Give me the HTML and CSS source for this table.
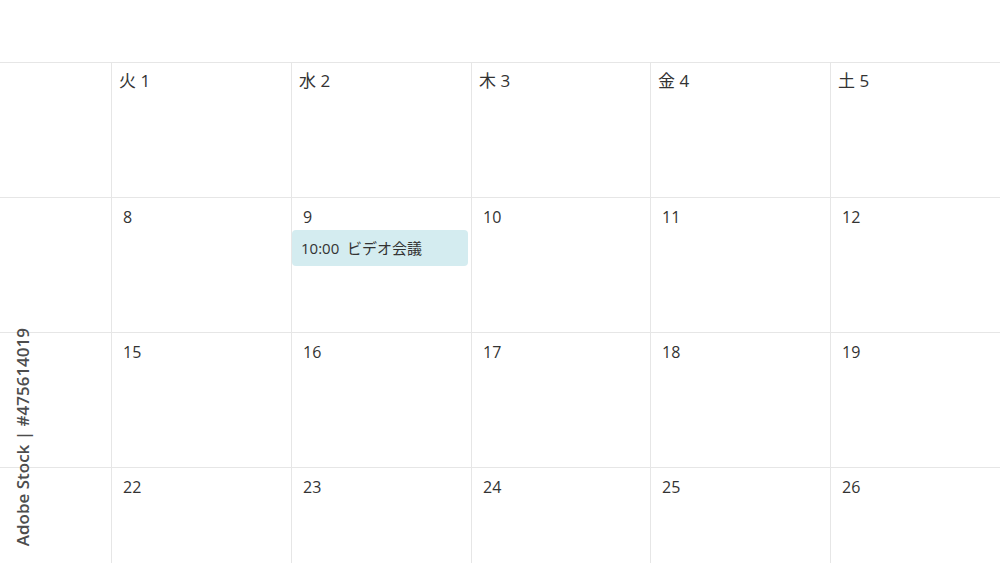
FILE: index.html
```html
<!DOCTYPE html>
<html lang="ja">
<head>
<meta charset="utf-8">
<link rel="stylesheet" href="styles.css">
</head>
<body>
<div class="page">
  <div class="grid">
    <div class="cell"></div>
    <div class="cell"><div class="num">火 1</div></div>
    <div class="cell"><div class="num">水 2</div></div>
    <div class="cell"><div class="num">木 3</div></div>
    <div class="cell"><div class="num">金 4</div></div>
    <div class="cell"><div class="num">土 5</div></div>

    <div class="cell"></div>
    <div class="cell"><div class="num">8</div></div>
    <div class="cell"><div class="num">9</div><div class="event">10:00&nbsp; ビデオ会議</div></div>
    <div class="cell"><div class="num">10</div></div>
    <div class="cell"><div class="num">11</div></div>
    <div class="cell"><div class="num">12</div></div>

    <div class="cell"></div>
    <div class="cell"><div class="num">15</div></div>
    <div class="cell"><div class="num">16</div></div>
    <div class="cell"><div class="num">17</div></div>
    <div class="cell"><div class="num">18</div></div>
    <div class="cell"><div class="num">19</div></div>

    <div class="cell"></div>
    <div class="cell"><div class="num">22</div></div>
    <div class="cell"><div class="num">23</div></div>
    <div class="cell"><div class="num">24</div></div>
    <div class="cell"><div class="num">25</div></div>
    <div class="cell"><div class="num">26</div></div>
  </div>
  <div class="stamp">Adobe Stock | #475614019</div>
</div>
</body>
</html>
```
FILE: styles.css
```css
html, body {
  margin: 0;
  padding: 0;
  background: #ffffff;
  overflow: hidden;
}
.page {
  position: relative;
  width: 1000px;
  height: 563px;
  overflow: hidden;
  padding-top: 62px;
  box-sizing: border-box;
  font-family: "Open Sans", "Noto Sans CJK JP", sans-serif;
  color: #333333;
}
.grid {
  display: grid;
  grid-template-columns: 112px 180px 180px 179px 180px 180px;
  grid-auto-rows: 135px;
  border-top: 1px solid #e6e6e6;
  width: 1011px;
}
.cell {
  border-right: 1px solid #e6e6e6;
  border-bottom: 1px solid #e6e6e6;
  box-sizing: border-box;
  display: flex;
  flex-direction: column;
}
.num {
  padding: 8px 11px 0 11px;
  font-size: 16px;
  line-height: 22px;
  color: #333333;
  font-family: "Open Sans", "Noto Sans CJK JP", sans-serif;
}
.cell:nth-child(-n+6) .num {
  padding-left: 7px;
  font-size: 17px;
  padding-top: 7px;
}
.event {
  margin: 2px 3px 0 0;
  height: 36px;
  line-height: 36px;
  padding-left: 9px;
  background: #d4ecf0;
  border-radius: 4px;
  font-size: 15px;
  color: #333333;
  font-family: "Open Sans", "Noto Sans CJK JP", sans-serif;
  white-space: nowrap;
}
.stamp {
  position: absolute;
  left: 11px;
  top: 328px;
  writing-mode: vertical-rl;
  transform: rotate(180deg);
  font-family: "Open Sans", sans-serif;
  font-size: 17px;
  font-weight: 600;
  color: #4d4d4d;
  white-space: nowrap;
}
```
